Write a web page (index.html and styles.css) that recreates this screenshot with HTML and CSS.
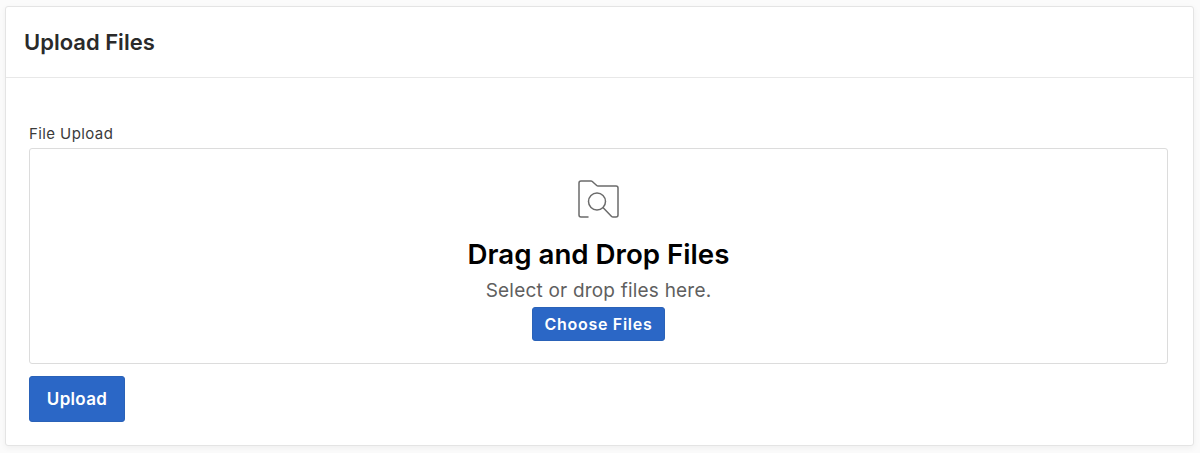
FILE: index.html
```html
<!DOCTYPE html>
<html lang="en">
  <head>
    <meta charset="UTF-8" />
    <title>Upload Files</title>
    <link rel="stylesheet" href="styles.css">
  </head>
  <body>
    <div class="card">
      <div class="card-header">
        <h2 class="card-title">Upload Files</h2>
      </div>
      <div class="card-body">
        <label class="field-label">File Upload</label>
        <div class="dropzone">
          <svg class="dropzone-icon" width="41" height="39" viewBox="0 0 41 39" fill="none" stroke="#6b6b6b" stroke-width="1.5" stroke-linecap="round" stroke-linejoin="round">
            <path d="M10 38H3a2 2 0 0 1-2-2V4a2 2 0 0 1 2-2h10a2 2 0 0 1 1.300.5l4.400 4a2 2 0 0 0 1.300.5H38a2 2 0 0 1 2 2v27a2 2 0 0 1-2 2h-3a2 2 0 0 1-1.400-.6L25.200 28.700" />
            <circle cx="19" cy="22.500" r="8.500" />
          </svg>
          <h3 class="dropzone-title">Drag and Drop Files</h3>
          <p class="dropzone-text">Select or drop files here.</p>
          <button class="btn btn-small">Choose Files</button>
        </div>
        <button class="btn btn-upload">Upload</button>
      </div>
    </div>
  </body>
</html>
```

FILE: styles.css
```css
html, body {
    margin: 0;
    height: 453px;
    overflow: hidden;
}

body {
    background: #fbfbfb;
    padding: 6px 6px 0 5px;
    box-sizing: border-box;
    font-family: Inter, "Liberation Sans", sans-serif;
}

.card {
    background: #fff;
    border: 1px solid #e4e4e4;
    border-radius: 3px;
    box-shadow: 0 2px 6px rgba(0, 0, 0, 0.05);
    height: 440px;
    box-sizing: border-box;
}

.card-header {
    height: 70px;
    border-bottom: 1px solid #e8e8e8;
    display: flex;
    align-items: center;
    padding-left: 18px;
}

.card-title {
    margin: 0;
    font-size: 22px;
    font-weight: 600;
    color: #2a2a2a;
}

.card-body {
    padding: 46px 25px 0 23px;
}

.field-label {
    display: block;
    font-size: 15px;
    line-height: 20px;
    color: #3b3b3b;
    letter-spacing: 0.4px;
    margin-bottom: 4px;
}

.dropzone {
    height: 216px;
    box-sizing: border-box;
    border: 1px solid #dcdcdc;
    border-radius: 3px;
    display: flex;
    flex-direction: column;
    align-items: center;
    padding-top: 30px;
}

.dropzone-title {
    margin: 18px 0 0;
    font-size: 27.700px;
    line-height: 36px;
    font-weight: 600;
    color: #000;
}

.dropzone-text {
    margin: 7px 0 0;
    font-size: 19px;
    line-height: 24px;
    letter-spacing: 0.2px;
    color: #5f5f5f;
}

.btn {
    display: block;
    border: 1px solid #2a62b8;
    border-radius: 3px;
    background: #2b67c6;
    color: #fff;
    font-family: inherit;
    font-weight: 600;
    padding: 0;
}

.btn-small {
    width: 133px;
    height: 34px;
    margin-top: 4px;
    font-size: 16px;
    letter-spacing: 0.7px;
}

.btn-upload {
    width: 96px;
    height: 46px;
    margin-top: 12px;
    font-size: 17px;
    letter-spacing: 0.3px;
}
```
